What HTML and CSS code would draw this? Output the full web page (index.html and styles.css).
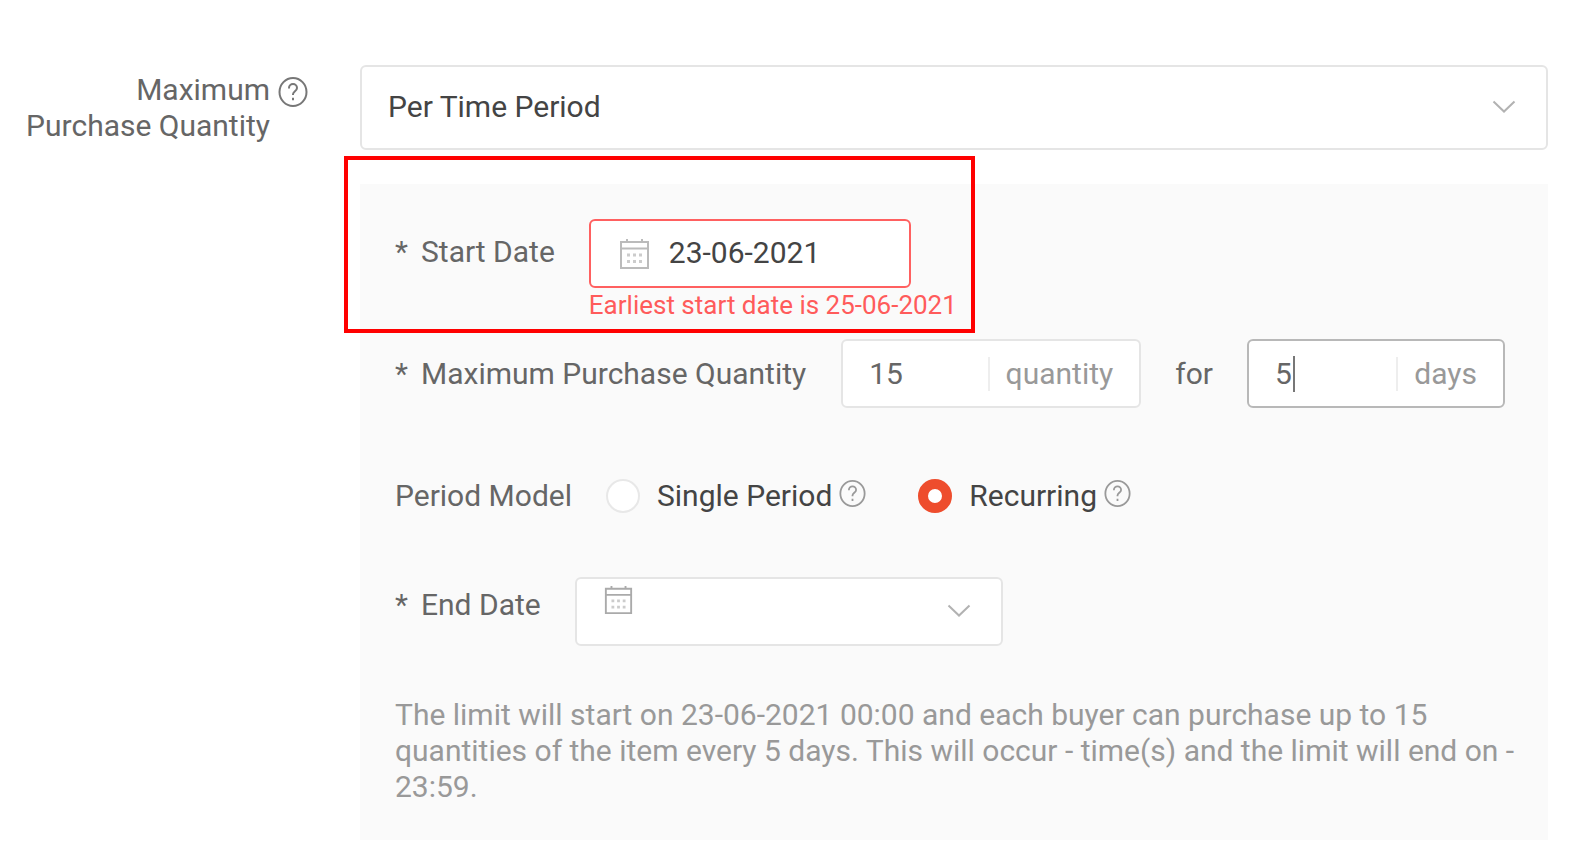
FILE: index.html
```html
<!DOCTYPE html>
<html lang="en">
<head>
<meta charset="utf-8">
<meta name="viewport" content="width=device-width, initial-scale=1">
<title>Maximum Purchase Quantity</title>
<link rel="stylesheet" href="styles.css">
</head>
<body>
<svg class="defs" aria-hidden="true">
  <symbol id="help" viewBox="0 0 30 30">
    <ellipse cx="15" cy="15" rx="13.5" ry="14"/>
    <path d="M11 11.500V11a4 4 0 0 1 8 0c0 3-4 3.400-4 6.200v.8M15 20.800v2.400"/>
  </symbol>
  <symbol id="calendar" viewBox="0 0 30 32">
    <path d="M1.500 4h27v26h-27zM1.500 10.500h27M7.500 1v4M22.500 1v4"/>
    <path class="dots" d="M7.500 17h3M13.500 17h3M19.500 17h3M7.500 23.500h3M13.500 23.500h3M19.500 23.500h3"/>
  </symbol>
  <symbol id="chevron" viewBox="0 0 24 14">
    <path d="M1.500 1.500 12 11.500l10.500-10"/>
  </symbol>
</svg>
<form class="form">
  <div class="label-col">
    <label class="main-label" for="limit">Maximum Purchase Quantity</label>
    <svg class="icon help-large"><use href="#help"/></svg>
  </div>
  <div class="content">
    <div class="select-wrap">
      <select class="box select-main" id="limit"><option>Per Time Period</option></select>
      <svg class="icon chevron"><use href="#chevron"/></svg>
    </div>
    <div class="panel">
      <div class="highlight"></div>
      <div class="row row-start">
        <label class="row-label" for="start"><span class="star">*</span>Start Date</label>
        <div class="start-field">
          <div class="box group invalid">
            <svg class="icon calendar"><use href="#calendar"/></svg>
            <input class="input date-input" id="start" type="text" value="23-06-2021">
          </div>
          <p class="error">Earliest start date is 25-06-2021</p>
        </div>
      </div>
      <div class="row row-quantity">
        <label class="row-label" for="quantity"><span class="star">*</span>Maximum Purchase Quantity</label>
        <div class="box group quantity">
          <input class="input" id="quantity" type="text" value="15">
          <span class="unit">quantity</span>
        </div>
        <label class="for" for="days">for</label>
        <div class="box group days">
          <input class="input" id="days" type="text" value="5">
          <span class="caret"></span>
          <span class="unit">days</span>
        </div>
      </div>
      <div class="row row-period">
        <span class="row-label">Period Model</span>
        <label class="option"><input class="radio" type="radio" name="period">Single Period</label>
        <svg class="icon help-small"><use href="#help"/></svg>
        <label class="option option-next"><input class="radio" type="radio" name="period" checked>Recurring</label>
        <svg class="icon help-small"><use href="#help"/></svg>
      </div>
      <div class="row row-end">
        <label class="row-label" for="end"><span class="star">*</span>End Date</label>
        <div class="select-wrap end-wrap">
          <select class="box select-end" id="end"><option></option></select>
          <svg class="icon calendar end-calendar"><use href="#calendar"/></svg>
          <svg class="icon chevron"><use href="#chevron"/></svg>
        </div>
      </div>
      <p class="note">The limit will start on 23-06-2021 00:00 and each buyer can purchase up to 15 quantities of the item every 5 days. This will occur - time(s) and the limit will end on - 23:59.</p>
    </div>
  </div>
</form>
</body>
</html>
```
FILE: styles.css
```css
* { box-sizing: border-box; }
body {
  margin: 0;
  background: #fff;
  color: #666;
  font: 30px/36px Roboto, "Liberation Sans", sans-serif;
}
input, select { font: inherit; color: inherit; }
p { margin: 0; }
.defs { position: absolute; width: 0; height: 0; }
.form {
  display: grid;
  grid-template-columns: 285px 1fr;
  column-gap: 52px;
  padding: 65px 22px 12px 23px;
}
.label-col {
  display: flex;
  align-items: flex-start;
  gap: 8px;
  padding-top: 7px;
  text-align: right;
}
.main-label { flex: 1; }
.icon {
  flex: none;
  fill: none;
  stroke: #777;
  stroke-width: 2;
}
.help-large { width: 30px; height: 32px; margin-top: 4px; }
.help-small { width: 27px; height: 27px; margin: 0 0 6px 7px; stroke: #999; }
.box {
  border: 2px solid #e5e5e5;
  border-radius: 6px;
  background: #fff;
}
.select-wrap { position: relative; }
.select-main, .select-end {
  display: block;
  width: 100%;
  appearance: none;
  outline: none;
}
.select-main { height: 85px; padding: 0 26px 2px; color: #444; }
.select-end { height: 69px; padding: 0 70px; }
.chevron {
  position: absolute;
  top: 50%;
  right: 32px;
  width: 24px;
  height: 14px;
  margin-top: -8px;
  stroke: #b2b2b2;
  pointer-events: none;
}
.panel {
  position: relative;
  margin-top: 34px;
  padding: 35px 24px 35px 35px;
  background: #fafafa;
}
.highlight {
  position: absolute;
  top: -28px;
  left: -16px;
  width: 631px;
  height: 177px;
  border: 4px solid #f00;
  pointer-events: none;
}
.row { display: flex; align-items: center; }
.row-label { white-space: nowrap; }
.star { display: inline-block; width: 26px; }
.row-start { align-items: flex-start; margin-bottom: 16px; }
.row-start .row-label { padding-top: 15px; }
.start-field { margin-left: 34px; }
.group { position: relative; display: flex; align-items: center; height: 69px; }
.invalid { width: 322px; padding-left: 28px; border-color: #ff6060; color: #444; }
.calendar { width: 31px; height: 32px; stroke: #bbb; }
.dots { stroke-width: 3; stroke: #ccc; }
.input {
  flex: 1;
  min-width: 0;
  padding: 0 0 0 26px;
  border: 0;
  background: none;
  outline: none;
}
.date-input { padding: 0 0 2px 19px; }
.error { font-size: 26px; line-height: 35px; color: #ff5b5b; white-space: nowrap; }
.row-quantity { margin-bottom: 70px; }
.quantity { width: 300px; margin-left: 35px; }
.days { width: 258px; border-color: #b8b8b8; }
.for { margin: 0 34px; }
.unit {
  padding: 0 26px 0 16px;
  border-left: 2px solid #eee;
  line-height: 34px;
  color: #999;
}
.caret {
  position: absolute;
  left: 44px;
  width: 2px;
  height: 36px;
  background: #777;
}
.row-period { margin-bottom: 63px; color: #666; }
.option { display: flex; align-items: center; margin-left: 34px; color: #444; white-space: nowrap; }
.option-next { margin-left: 52px; }
.radio {
  width: 34px;
  height: 34px;
  margin: 0 17px 0 0;
  appearance: none;
  border: 2px solid #e8e8e8;
  border-radius: 50%;
  background: #fff;
}
.radio:checked { border: 10px solid #ee4d2d; }
.row-end { align-items: flex-start; margin-bottom: 51px; }
.row-end .row-label { padding-top: 10px; }
.end-wrap { width: 428px; margin-left: 34px; }
.end-calendar { position: absolute; top: 8px; left: 28px; height: 30px; stroke: #aaa; pointer-events: none; }
.note { color: #999; }
```
